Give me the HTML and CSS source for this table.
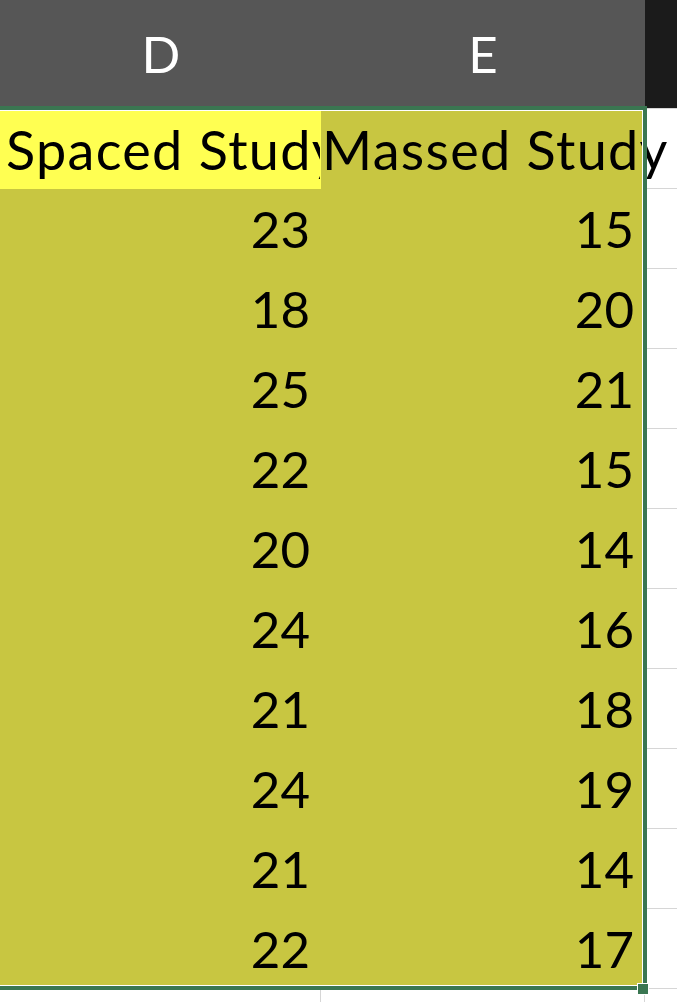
FILE: index.html
```html
<!DOCTYPE html>
<html>
<head>
<meta charset="utf-8">
<link rel="stylesheet" href="styles.css">
</head>
<body>
<div class="sheet">
  <div class="colheads">
    <div class="ch ch-d">D</div>
    <div class="ch ch-e">E</div>
    <div class="ch ch-f"></div>
  </div>
  <div class="row">
    <div class="cell d active"><span class="txt">Spaced Study</span></div>
    <div class="cell e sel over"><span class="txt">Massed Study</span></div>
    <div class="cell f"></div>
  </div>
  <div class="row"><div class="cell d sel num">23</div><div class="cell e sel num">15</div><div class="cell f"></div></div>
  <div class="row"><div class="cell d sel num">18</div><div class="cell e sel num">20</div><div class="cell f"></div></div>
  <div class="row"><div class="cell d sel num">25</div><div class="cell e sel num">21</div><div class="cell f"></div></div>
  <div class="row"><div class="cell d sel num">22</div><div class="cell e sel num">15</div><div class="cell f"></div></div>
  <div class="row"><div class="cell d sel num">20</div><div class="cell e sel num">14</div><div class="cell f"></div></div>
  <div class="row"><div class="cell d sel num">24</div><div class="cell e sel num">16</div><div class="cell f"></div></div>
  <div class="row"><div class="cell d sel num">21</div><div class="cell e sel num">18</div><div class="cell f"></div></div>
  <div class="row"><div class="cell d sel num">24</div><div class="cell e sel num">19</div><div class="cell f"></div></div>
  <div class="row"><div class="cell d sel num">21</div><div class="cell e sel num">14</div><div class="cell f"></div></div>
  <div class="row"><div class="cell d sel num">22</div><div class="cell e sel num">17</div><div class="cell f"></div></div>
  <div class="row row-last"><div class="cell d"></div><div class="cell e"></div><div class="cell f"></div></div>
  <div class="selection"></div>
  <div class="handle"></div>
</div>
</body>
</html>
```
FILE: styles.css
```css
html, body {
  margin: 0;
  padding: 0;
  background: #ffffff;
  overflow: hidden;
}
body {
  width: 677px;
  height: 1002px;
  font-family: Lato, "Liberation Sans", sans-serif;
}
.sheet {
  position: relative;
  margin-left: -3px;
  width: 680px;
  height: 1002px;
  overflow: hidden;
}
.colheads {
  display: grid;
  grid-template-columns: 324px 324px 1fr;
  height: 108px;
  border-bottom: 1px solid #d6d6d6;
}
.ch {
  background: #565656;
  color: #ffffff;
  font-size: 51px;
  display: flex;
  justify-content: center;
  align-items: flex-start;
  padding-top: 28px;
  line-height: 1;
}
.ch-d { padding-left: 4px; }
.ch-f {
  background: #1b1b1b;
}
.row {
  display: grid;
  grid-template-columns: 324px 324px 1fr;
  height: 80px;
}
.row-last {
  height: 13px;
}
.cell {
  box-sizing: border-box;
  border-right: 1px solid #d6d6d6;
  border-bottom: 1px solid #d6d6d6;
  font-size: 51px;
  line-height: 1;
  color: #000000;
  display: flex;
  align-items: flex-end;
  padding-bottom: 14px;
  white-space: nowrap;
}
.row-last .cell {
  border-bottom: none;
  padding-bottom: 0;
}
.cell.f { border-right: none; }
.sel {
  background: #c8c641;
  border-color: transparent;
}
.active {
  background: #ffff52;
  border-color: transparent;
  overflow: hidden;
  padding-left: 9px;
}
.active, .over {
  font-size: 54px;
  letter-spacing: 1.3px;
  padding-bottom: 11px;
}
.over {
  overflow: visible;
  padding-left: 1px;
  position: relative;
  z-index: 1;
}
.num {
  justify-content: flex-end;
  padding-right: 10px;
}
.selection {
  position: absolute;
  left: -10px;
  top: 106px;
  width: 660px;
  height: 884px;
  box-sizing: border-box;
  border: 4px solid #3a7651;
  box-shadow: inset 0 0 0 1px #ffffff;
  z-index: 2;
}
.handle {
  position: absolute;
  left: 640px;
  top: 983px;
  width: 10px;
  height: 10px;
  background: #3a7651;
  border: 1px solid #ffffff;
  z-index: 3;
}
```
